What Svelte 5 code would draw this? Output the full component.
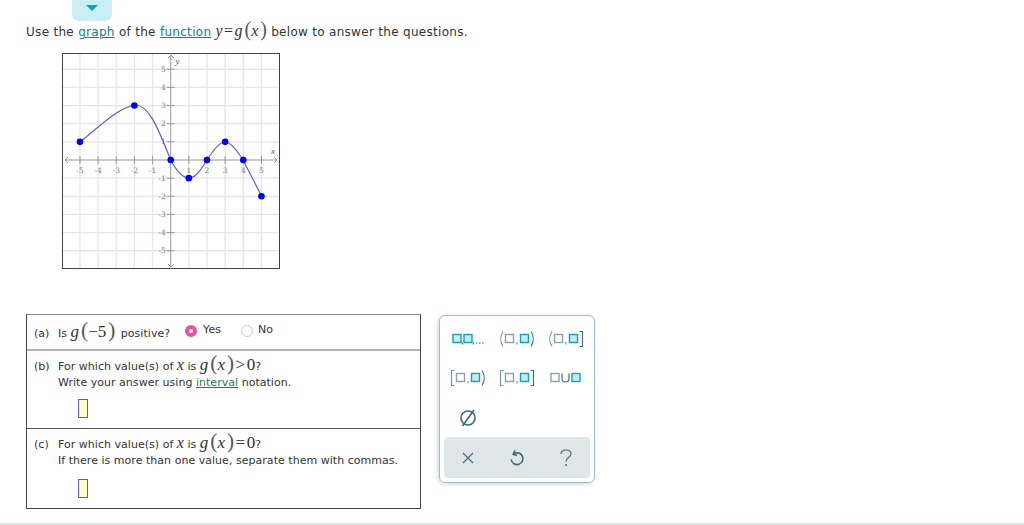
<script>
  const U = 18.15, CX = 170.7, CY = 160;
  const ticks = [-5, -4, -3, -2, -1, 1, 2, 3, 4, 5];
  const gx = (v) => CX + v * U;
  const gy = (v) => CY - v * U;
  const dots = [[-5, 1], [-2, 3], [0, 0], [1, -1], [2, 0], [3, 1], [4, 0], [5, -2]];
</script>

<div class="page">
  <div class="tab"><span class="tri"></span></div>
  <p class="prompt">Use the <a href="#g" class="teal">graph</a> of the <a href="#f" class="teal">function</a> <span class="m"><i>y</i><span class="op">=</span><i>g</i><span class="par">(</span><i>x</i><span class="par">)</span></span> below to answer the questions.</p>

  <svg class="graph" width="218" height="216" viewBox="62 53 218 216">
    <rect x="62.5" y="53.5" width="217" height="215" fill="#fff" stroke="#444" />
    {#each ticks as t}
      <line x1={gx(t)} x2={gx(t)} y1="54" y2="268" stroke="#e8e4e8" stroke-width="1.3" />
      <line x1="63" x2="279" y1={gy(t)} y2={gy(t)} stroke="#e8e4e8" stroke-width="1.3" />
    {/each}
    <line x1="66" x2="276" y1={CY} y2={CY} stroke="#999" />
    <line x1={CX} x2={CX} y1="56" y2="266" stroke="#999" />
    <path d="M68 157 L65 160 L68 163 M274 157 L277 160 L274 163 M168 58 L171 55 L174 58 M168 264 L171 267 L174 264" fill="none" stroke="#999" />
    {#each ticks as t}
      <line x1={gx(t)} x2={gx(t)} y1={CY - 4} y2={CY + 4} stroke="#999" />
      <line x1={CX - 4} x2={CX + 4} y1={gy(t)} y2={gy(t)} stroke="#999" />
      <text class="lbl" x={gx(t)} y={CY + 13} text-anchor="middle">{t}</text>
      <text class="lbl" x={CX - 5} y={gy(t) + 2.5} text-anchor="end">{t}</text>
    {/each}
    <text class="axis" x="175.5" y="64">y</text>
    <text class="axis" x="271" y="154">x</text>
    <path d="M80 142 C100 126 118 108 134.5 105 C150 104 160 134 170.7 160 C176 170 182 178 189 178 C196 178 202 168 207 160 C212 152 219 142 225 142 C231 142 238 152 243 160 L261.5 196" fill="none" stroke="#5a5cf0" stroke-width="1.2" />
    {#each dots as d}
      <circle cx={gx(d[0])} cy={gy(d[1])} r="3.3" fill="#0000f0" />
    {/each}
  </svg>

  <div class="work">
    <div class="qs">
      <div class="row ra">
        <span class="tag">(a)</span>
        <span class="ask">Is <span class="m big gap"><i>g</i><span class="par">(</span>−5<span class="par">)</span></span> positive?</span>
        <span class="radio on"></span><span class="opt">Yes</span>
        <span class="radio no"></span><span class="opt">No</span>
      </div>
      <div class="row rb">
        <span class="tag">(b)</span>
        <div class="body">
          <div class="l1">For which value(s) of <span class="m"><i>x</i></span> is <span class="m big"><i>g</i><span class="par">(</span><i>x</i><span class="par">)</span><span class="op">&gt;</span>0</span>?</div>
          <div>Write your answer using <a href="#i" class="green">interval</a> notation.</div>
          <span class="field"></span>
        </div>
      </div>
      <div class="row rc">
        <span class="tag">(c)</span>
        <div class="body">
          <div class="l1">For which value(s) of <span class="m"><i>x</i></span> is <span class="m big"><i>g</i><span class="par">(</span><i>x</i><span class="par">)</span><span class="op">=</span>0</span>?</div>
          <div>If there is more than one value, separate them with commas.</div>
          <span class="field"></span>
        </div>
      </div>
    </div>

    <div class="palette">
      <div class="keys">
        <div class="key">
          <svg width="32" height="12" viewBox="0 0 32 12">
            <rect class="on" x="1" y="1.5" width="8" height="8" /><rect class="on" x="12" y="1.5" width="8" height="8" />
            <path class="ink" d="M10.5 9.5v2M21.5 9.5v2M24 10h1.5M27 10h1.5M30 10h1.5" />
          </svg>
        </div>
        <div class="key">
          <svg width="34" height="16" viewBox="0 0 34 16">
            <path class="soft" d="M3 .5C0 5 0 11 3 15.5" /><path class="ink" d="M31 .5C34 5 34 11 31 15.5" />
            <rect class="off" x="5.5" y="3.5" width="8" height="8" /><rect class="on" x="20.5" y="3.5" width="8" height="8" />
            <path class="soft" d="M17 11v2.5" />
          </svg>
        </div>
        <div class="key">
          <svg width="34" height="16" viewBox="0 0 34 16">
            <path class="soft" d="M3 .5C0 5 0 11 3 15.5" /><path class="ink" d="M30.5 .5h3v15h-3" />
            <rect class="off" x="5.5" y="3.5" width="8" height="8" /><rect class="on" x="20.5" y="3.5" width="8" height="8" />
            <path class="soft" d="M17 11v2.5" />
          </svg>
        </div>
        <div class="key">
          <svg width="34" height="16" viewBox="0 0 34 16">
            <path class="soft" d="M3.5 .5h-3v15h3" /><path class="ink" d="M31 .5C34 5 34 11 31 15.5" />
            <rect class="off" x="5.5" y="3.5" width="8" height="8" /><rect class="on" x="20.5" y="3.5" width="8" height="8" />
            <path class="soft" d="M17 11v2.5" />
          </svg>
        </div>
        <div class="key">
          <svg width="34" height="16" viewBox="0 0 34 16">
            <path class="soft" d="M3.5 .5h-3v15h3" /><path class="ink" d="M30.5 .5h3v15h-3" />
            <rect class="off" x="5.5" y="3.5" width="8" height="8" /><rect class="on" x="20.5" y="3.5" width="8" height="8" />
            <path class="soft" d="M17 11v2.5" />
          </svg>
        </div>
        <div class="key">
          <svg width="32" height="12" viewBox="0 0 32 12">
            <rect class="off" x="1" y="1.5" width="8" height="8" /><rect class="on" x="22" y="1.5" width="8" height="8" />
            <path class="ink" d="M12 1.5v5a3.5 3.5 0 0 0 7 0v-5" />
          </svg>
        </div>
        <div class="key">
          <svg width="18" height="18" viewBox="0 0 18 18">
            <circle class="ink2" cx="9" cy="9" r="7" /><path class="ink2" d="M15 1 3.5 17" />
          </svg>
        </div>
      </div>
      <div class="actions">
        <svg width="12" height="12" viewBox="0 0 12 12"><path class="ink" d="M1 1 11 11M11 1 1 11" /></svg>
        <svg width="14" height="16" viewBox="0 0 14 16"><path class="ink2" d="M5 .5 3.2 4.2 7 5.6M3.2 4.2A5.9 5.9 0 1 1 1.2 9.5" /></svg>
        <svg width="12" height="18" viewBox="0 0 12 18"><path class="ink" d="M1 5C1 2.5 3 1 6 1 9 1 11 2.5 11 5 11 8 6 8.5 6 12.5" /><circle cx="6" cy="16" r="1" fill="#4a6f7c" /></svg>
      </div>
    </div>
  </div>

  <div class="foot"></div>
</div>

<style>
  :global(body) { margin: 0; background: #fff; }
  .page { width: 1024px; height: 525px; overflow: hidden; position: relative; font: 11px/16px "DejaVu Sans", Verdana, sans-serif; color: #333; letter-spacing: .03px; }
  .tab { width: 40px; height: 21px; margin-left: 72px; background: #c9eff4; border-radius: 0 0 7px 7px; display: flex; justify-content: center; padding-top: 5px; box-sizing: border-box; }
  .tri { width: 0; height: 0; border-left: 6.5px solid transparent; border-right: 6.5px solid transparent; border-top: 6.5px solid #00a5c6; }
  .prompt { margin: 3px 0 0 26px; font-size: 12px; line-height: 17px; height: 29px; white-space: nowrap; letter-spacing: .3px; }
  .teal { color: #0d7f97; }
  .green { color: #1d7a50; }
  .m { font-family: "Liberation Serif", "Times New Roman", serif; font-size: 16px; line-height: 0; color: #333; letter-spacing: 0; }
  .m i { font-style: italic; }
  .big { font-size: 17px; }
  .gap { margin-right: 2px; }
  .m .par { font-size: 1.25em; color: #555; line-height: 0; margin-left: 2px; }
  .m .op { margin: 0 1.5px; }
  .graph { display: block; margin-left: 62px; }
  .lbl { font: 7.5px "DejaVu Serif", serif; fill: #777; }
  .axis { font: italic 9px "Liberation Serif", serif; fill: #555; }
  .work { display: flex; align-items: flex-start; margin: 45px 0 0 26px; }
  .qs { width: 395px; box-sizing: border-box; border: 1px solid #444; border-top-color: #888; }
  .row { display: flex; padding-left: 7px; box-sizing: border-box; }
  .tag { width: 24px; flex: none; }
  .ra { height: 36px; align-items: center; padding-top: 3px; border-bottom: 2px solid #b4b4b4; }
  .ask { margin-right: 15px; white-space: nowrap; }
  .radio { width: 12px; height: 12px; box-sizing: border-box; border-radius: 50%; border: 1px solid #c8d0d2; background: #fff; margin: -6px 6px 0 0; }
  .radio.on { background: #fff; border: 4px solid #ee4f9f; }
  .radio.no { margin-right: 5px; }
  .opt { margin: -8px 20px 0 0; }
  .rb { height: 78px; padding-top: 8px; border-bottom: 1px solid #555; }
  .rc { height: 79px; padding-top: 8px; }
  .body { display: flex; flex-direction: column; align-items: flex-start; white-space: nowrap; }
  .l1 { height: 16px; }
  .field { display: block; width: 8px; height: 17px; margin: 8px 0 0 20px; background: #ffffc8; border: 1px solid #5a5ce0; }
  .rc .field { margin-top: 10px; }
  .palette { width: 156px; height: 168px; margin: 1px 0 0 18px; box-sizing: border-box; border: 1px solid #a9bcc3; border-radius: 6px; box-shadow: -1px 1px 4px rgba(90, 120, 130, .3); padding: 3px 4px 4px; display: flex; flex-direction: column; }
  .keys { display: grid; grid-template-columns: repeat(3, 1fr); grid-auto-rows: 39.5px; height: 118px; }
  .key { display: flex; align-items: center; justify-content: center; }
  .actions { height: 41px; background: #dfe6e8; border-radius: 4px; display: grid; grid-template-columns: repeat(3, 1fr); align-items: center; justify-items: center; }
  svg { overflow: visible; }
  .on { fill: #c4ecf1; stroke: #0fa3bf; stroke-width: 1.4; }
  .off { fill: #fff; stroke: #8ba2ab; stroke-width: 1.4; }
  .ink { fill: none; stroke: #4a6f7c; stroke-width: 1.2; }
  .soft { fill: none; stroke: #7d99a3; stroke-width: 1.2; }
  .ink2 { fill: none; stroke: #3f6875; stroke-width: 1.6; }
  .foot { position: absolute; left: 0; right: 0; bottom: 0; height: 2px; background: #dbe8ea; }
</style>
